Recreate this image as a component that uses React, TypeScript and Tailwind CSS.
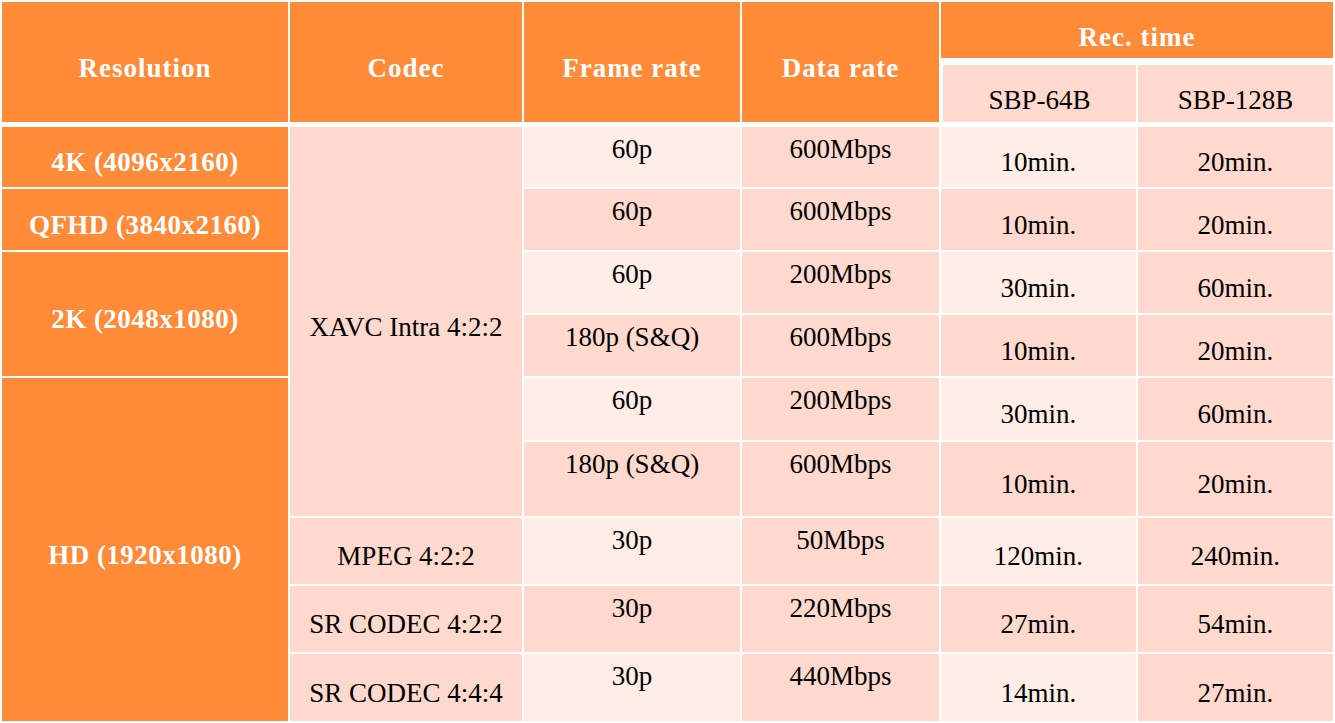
import React from "react";

const OR = "bg-[#ff8a38]";
const PK = "bg-[#ffd9ce]";
const LT = "bg-[#ffede6]";

type Row = { fr: string; dr: string; a: string; b: string };

const rows: Row[] = [
  { fr: "60p", dr: "600Mbps", a: "10min.", b: "20min." },
  { fr: "60p", dr: "600Mbps", a: "10min.", b: "20min." },
  { fr: "60p", dr: "200Mbps", a: "30min.", b: "60min." },
  { fr: "180p (S&Q)", dr: "600Mbps", a: "10min.", b: "20min." },
  { fr: "60p", dr: "200Mbps", a: "30min.", b: "60min." },
  { fr: "180p (S&Q)", dr: "600Mbps", a: "10min.", b: "20min." },
  { fr: "30p", dr: "50Mbps", a: "120min.", b: "240min." },
  { fr: "30p", dr: "220Mbps", a: "27min.", b: "54min." },
  { fr: "30p", dr: "440Mbps", a: "14min.", b: "27min." },
];

const rowStart = [
  "row-start-4",
  "row-start-5",
  "row-start-6",
  "row-start-7",
  "row-start-8",
  "row-start-9",
  "row-start-10",
  "row-start-11",
  "row-start-12",
];

const center = "flex items-center justify-center pt-[10px] text-center";
const top = "flex justify-center pt-[7px] text-center";
const hdr = `${OR} ${center} pt-[12px] font-bold text-white tracking-[1px]`;
const res = `${OR} ${center} font-bold text-white tracking-[0.5px]`;

export default function App() {
  return (
    <div className="w-[1335px] h-[723px] bg-white p-[2px] grid gap-[2px] grid-cols-[286px_232px_216px_197px_195px_195px] grid-rows-[56px_62px_1px_60px_61px_61px_61px_62px_74px_66px_66px_67px] font-['Liberation_Serif','Times_New_Roman',serif] text-[27px] leading-[30px] text-black">
      {/* header */}
      <div className={`${hdr} col-start-1 row-start-1 row-span-2`}>Resolution</div>
      <div className={`${hdr} col-start-2 row-start-1 row-span-2`}>Codec</div>
      <div className={`${hdr} col-start-3 row-start-1 row-span-2`}>Frame rate</div>
      <div className={`${hdr} col-start-4 row-start-1 row-span-2`}>Data rate</div>
      <div className={`${hdr} col-start-5 col-span-2 row-start-1 pt-[14px]`}>Rec. time</div>
      <div className={`${PK} ${center} pt-[12px] col-start-5 row-start-2 mt-[5px] ml-[2px]`}>SBP-64B</div>
      <div className={`${PK} ${center} pt-[12px] col-start-6 row-start-2 mt-[5px]`}>SBP-128B</div>

      {/* resolution */}
      <div className={`${res} col-start-1 row-start-4`}>4K (4096x2160)</div>
      <div className={`${res} col-start-1 row-start-5`}>QFHD (3840x2160)</div>
      <div className={`${res} col-start-1 row-start-6 row-span-2`}>2K (2048x1080)</div>
      <div className={`${res} col-start-1 row-start-8 row-span-5`}>HD (1920x1080)</div>

      {/* codec */}
      <div className={`${PK} ${center} col-start-2 row-start-4 row-span-6`}>XAVC Intra 4:2:2</div>
      <div className={`${PK} ${center} col-start-2 row-start-10`}>MPEG 4:2:2</div>
      <div className={`${PK} ${center} col-start-2 row-start-11`}>SR CODEC 4:2:2</div>
      <div className={`${PK} ${center} col-start-2 row-start-12`}>SR CODEC 4:4:4</div>

      {rows.map((r, i) => (
        <React.Fragment key={i}>
          <div className={`${i % 2 === 0 ? LT : PK} ${top} col-start-3 ${rowStart[i]}`}>{r.fr}</div>
          <div className={`${PK} ${top} col-start-4 ${rowStart[i]}`}>{r.dr}</div>
          <div className={`${i % 2 === 0 ? LT : PK} ${center} col-start-5 ${rowStart[i]}`}>{r.a}</div>
          <div className={`${PK} ${center} col-start-6 ${rowStart[i]}`}>{r.b}</div>
        </React.Fragment>
      ))}
    </div>
  );
}
